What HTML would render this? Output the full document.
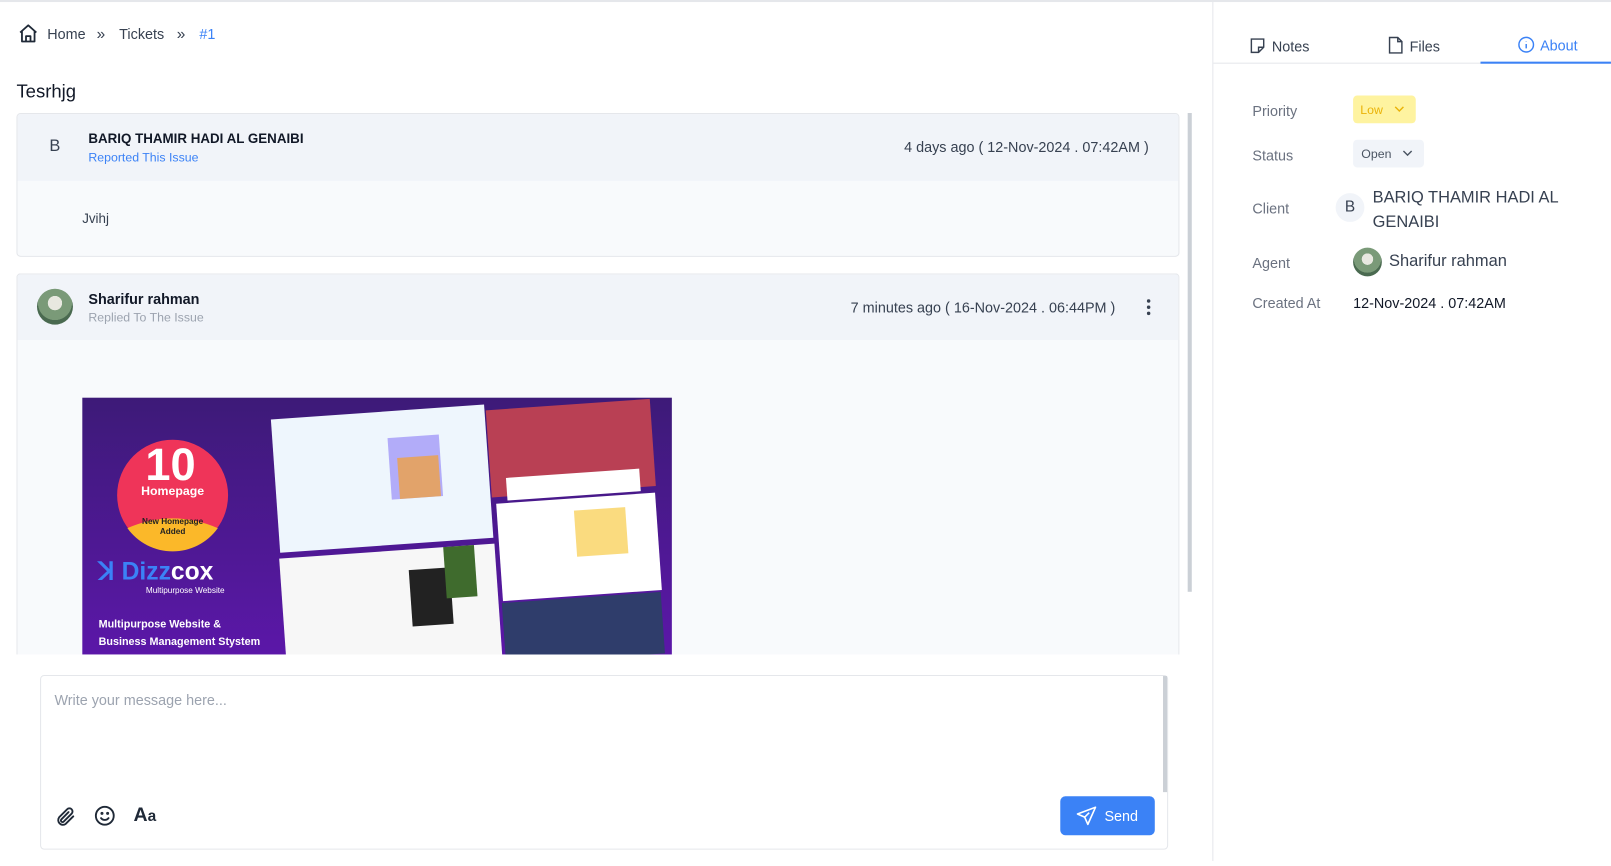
<!DOCTYPE html>
<html><head><meta charset="utf-8"><style>
*{box-sizing:border-box;margin:0;padding:0}
body{width:1611px;height:866px;background:#fff;font-family:"Liberation Sans",sans-serif;color:#111827;position:relative;overflow:hidden}
#w{position:absolute;left:0;top:0;width:1568px;height:843px;transform:scale(1.0274);transform-origin:0 0}
.abs{position:absolute}
.t{white-space:nowrap}
</style></head><body><div id="w">
<div class="abs" style="left:0;top:0;width:1611px;height:2px;background:#e5e7eb"></div>
<div class="abs" style="left:1180px;top:2px;width:1px;height:836px;background:#e5e7eb"></div>

<svg class="abs" style="left:17px;top:22px" width="21" height="21" viewBox="0 0 24 24" fill="none" stroke="#1f2937" stroke-width="2" stroke-linejoin="round"><path d="M3 11 12 3l9 8M5 9.5V21h14V9.5M9.5 21v-6h5v6"/></svg>
<div class="abs t" style="left:46px;top:25px;font-size:14px;color:#374151">Home</div>
<div class="abs t" style="left:94px;top:25px;font-size:15px;color:#374151">»</div>
<div class="abs t" style="left:116px;top:25px;font-size:14px;color:#374151">Tickets</div>
<div class="abs t" style="left:172px;top:25px;font-size:15px;color:#374151">»</div>
<div class="abs t" style="left:194px;top:25px;font-size:14px;color:#3b82f6">#1</div>
<div class="abs t" style="left:16px;top:79px;font-size:18px;color:#111827">Tesrhjg</div>

<div class="abs" style="left:1156px;top:110px;width:4px;height:466px;background:#cbd0d6"></div>

<div class="abs" style="left:16px;top:110px;width:1132px;height:140px;border:1px solid #e5e7eb;border-radius:4px;background:#f8fafc;overflow:hidden">
 <div style="height:65px;background:#f1f4f9"></div>
</div>
<div class="abs t" style="left:48px;top:134px;font-size:16px;color:#374151">B</div>
<div class="abs t" style="left:86px;top:127px;font-size:13px;font-weight:bold;color:#111827">BARIQ THAMIR HADI AL GENAIBI</div>
<div class="abs t" style="left:86px;top:146px;font-size:12px;color:#3b82f6">Reported This Issue</div>
<div class="abs t" style="left:880px;top:135px;font-size:14px;color:#374151">4 days ago ( 12-Nov-2024 . 07:42AM )</div>
<div class="abs t" style="left:80px;top:205px;font-size:13px;color:#374151">Jvihj</div>

<div class="abs" style="left:16px;top:266px;width:1132px;height:371px;border:1px solid #e5e7eb;border-bottom:none;border-radius:4px 4px 0 0;background:#f8fafc;overflow:hidden">
 <div style="height:64px;background:#f1f4f9"></div>
</div>
<div class="abs" style="left:36px;top:281px;width:35px;height:35px;border-radius:50%;background:radial-gradient(circle at 50% 40%,#e8e8e0 0 25%,#7a9a78 26% 60%,#4a6a50 61%)"></div>
<div class="abs t" style="left:86px;top:283px;font-size:14px;font-weight:bold;color:#111827">Sharifur rahman</div>
<div class="abs t" style="left:86px;top:302px;font-size:12px;color:#9ca3af">Replied To The Issue</div>
<div class="abs t" style="left:828px;top:291px;font-size:14px;color:#374151">7 minutes ago ( 16-Nov-2024 . 06:44PM )</div>
<svg class="abs" style="left:1112px;top:290px" width="12" height="18"><circle cx="6" cy="3" r="1.7" fill="#374151"/><circle cx="6" cy="9" r="1.7" fill="#374151"/><circle cx="6" cy="15" r="1.7" fill="#374151"/></svg>

<svg class="abs" style="left:80px;top:387px" width="574" height="250" viewBox="0 0 574 250">
<defs><linearGradient id="g" x1="0" y1="0" x2="0" y2="1"><stop offset="0" stop-color="#3d1a78"/><stop offset="1" stop-color="#5b17a8"/></linearGradient></defs>
<rect width="574" height="250" fill="url(#g)"/>
<circle cx="88" cy="95" r="54" fill="#ef3459"/>
<path d="M44 127 A54 54 0 0 0 132 127 Q88 108 44 127Z" fill="#fbb829"/>
<text x="86" y="80" fill="#fff" font-size="44" font-weight="bold" text-anchor="middle" font-family="Liberation Sans">10</text>
<text x="88" y="95" fill="#fff" font-size="12" font-weight="bold" text-anchor="middle" font-family="Liberation Sans">Homepage</text>
<text x="88" y="123" fill="#222" font-size="8" font-weight="bold" text-anchor="middle" font-family="Liberation Sans">New Homepage</text>
<text x="88" y="133" fill="#222" font-size="8" font-weight="bold" text-anchor="middle" font-family="Liberation Sans">Added</text>
<text x="16" y="177" fill="#3b82f6" font-size="24" font-weight="bold" font-family="Liberation Sans">ꓘ Dizz<tspan fill="#fff">cox</tspan></text>
<text x="62" y="190" fill="#fff" font-size="8" font-family="Liberation Sans">Multipurpose Website</text>
<text x="16" y="224" fill="#fff" font-size="10.5" font-weight="bold" font-family="Liberation Sans">Multipurpose Website &amp;</text>
<text x="16" y="241" fill="#fff" font-size="10.5" font-weight="bold" font-family="Liberation Sans">Business Management Stystem</text>
<g transform="rotate(-4 290 80)"><rect x="188" y="14" width="208" height="130" fill="#eef6fd"/><rect x="300" y="40" width="50" height="60" fill="#8b7cf6" opacity=".6"/><rect x="308" y="60" width="40" height="40" fill="#f6a02d" opacity=".7"/></g>
<g transform="rotate(-4 500 40)"><rect x="395" y="5" width="160" height="85" fill="#b94054"/><rect x="410" y="72" width="130" height="22" fill="#fff"/></g>
<g transform="rotate(-4 290 200)"><rect x="195" y="150" width="210" height="110" fill="#f7f7f7"/><rect x="320" y="170" width="40" height="55" fill="#222"/><rect x="355" y="150" width="30" height="50" fill="#3f6b2d"/></g>
<g transform="rotate(-4 480 130)"><rect x="405" y="98" width="155" height="95" fill="#fff"/><rect x="480" y="110" width="50" height="45" fill="#f5b800" opacity=".5"/></g>
<g transform="rotate(-4 480 220)"><rect x="410" y="195" width="155" height="60" fill="#2f3d6b"/></g>
</svg>

<div class="abs" style="left:39px;top:657px;width:1098px;height:170px;border:1px solid #e5e7eb;border-radius:4px;background:#fff"></div>
<div class="abs" style="left:1132px;top:658px;width:4px;height:113px;background:#cbd0d6"></div>
<div class="abs t" style="left:53px;top:673px;font-size:14px;color:#9ca3af">Write your message here...</div>
<svg class="abs" style="left:53px;top:784px" width="22" height="22" viewBox="0 0 24 24" fill="none" stroke="#1f2937" stroke-width="2" stroke-linecap="round"><path d="M20 11.5 12 19.5a5 5 0 0 1-7-7l8.5-8.5a3.3 3.3 0 0 1 4.7 4.7L9.7 17.2a1.7 1.7 0 0 1-2.4-2.4L15 7"/></svg>
<svg class="abs" style="left:91px;top:783px" width="22" height="22" viewBox="0 0 24 24" fill="none" stroke="#1f2937" stroke-width="2" stroke-linecap="round"><circle cx="12" cy="12" r="9.5"/><path d="M8 14.5a5 5 0 0 0 8 0"/><circle cx="9" cy="9.5" r=".6" fill="#1f2937"/><circle cx="15" cy="9.5" r=".6" fill="#1f2937"/></svg>
<div class="abs t" style="left:130px;top:783px;font-size:19px;color:#1f2937;font-weight:bold">A<span style="font-size:15px">a</span></div>
<div class="abs" style="left:1032px;top:775px;width:92px;height:38px;border-radius:5px;background:#3b82f6"></div>
<svg class="abs" style="left:1047px;top:784px" width="21" height="21" viewBox="0 0 24 24" fill="none" stroke="#fff" stroke-width="1.8" stroke-linejoin="round"><path d="M22 2 2 9.5l8 3.5 3.5 8L22 2ZM10 13l5-5"/></svg>
<div class="abs t" style="left:1075px;top:786px;font-size:14px;color:#fff">Send</div>

<div class="abs" style="left:1181px;top:61px;width:430px;height:1px;background:#e5e7eb"></div>
<div class="abs" style="left:1441px;top:60px;width:127px;height:2px;background:#3b82f6"></div>
<svg class="abs" style="left:1216px;top:36px" width="16" height="17" viewBox="0 0 16 17" fill="none" stroke="#374151" stroke-width="1.4"><path d="M2 2h12v8l-5 5H2Z M9 15v-5h5"/></svg>
<div class="abs t" style="left:1238px;top:37px;font-size:14px;color:#374151">Notes</div>
<svg class="abs" style="left:1351px;top:35px" width="15" height="18" viewBox="0 0 15 18" fill="none" stroke="#374151" stroke-width="1.4"><path d="M1.5 1.5h8l4 4v11h-12Z M9.5 1.5v4h4"/></svg>
<div class="abs t" style="left:1372px;top:37px;font-size:14px;color:#374151">Files</div>
<svg class="abs" style="left:1477px;top:35px" width="17" height="17" viewBox="0 0 24 24" fill="none" stroke="#3b82f6" stroke-width="2"><circle cx="12" cy="12" r="10"/><path d="M12 11v6M12 7v.5"/></svg>
<div class="abs t" style="left:1499px;top:36px;font-size:14px;color:#3b82f6">About</div>

<div class="abs t" style="left:1219px;top:100px;font-size:14px;color:#6b7280">Priority</div>
<div class="abs" style="left:1317px;top:93px;width:61px;height:27px;border-radius:4px;background:#fef3a0"></div>
<div class="abs t" style="left:1324px;top:100px;font-size:12px;color:#eab308">Low</div>
<svg class="abs" style="left:1357px;top:102px" width="10" height="8"><path d="M1 2l4 4 4-4" stroke="#eab308" stroke-width="1.4" fill="none"/></svg>
<div class="abs t" style="left:1219px;top:143px;font-size:14px;color:#6b7280">Status</div>
<div class="abs" style="left:1317px;top:136px;width:69px;height:27px;border-radius:4px;background:#f1f4f9"></div>
<div class="abs t" style="left:1325px;top:143px;font-size:12px;color:#4b5563">Open</div>
<svg class="abs" style="left:1365px;top:145px" width="10" height="8"><path d="M1 2l4 4 4-4" stroke="#4b5563" stroke-width="1.4" fill="none"/></svg>
<div class="abs t" style="left:1219px;top:195px;font-size:14px;color:#6b7280">Client</div>
<div class="abs" style="left:1300px;top:188px;width:28px;height:28px;border-radius:50%;background:#f1f4f9;text-align:center;line-height:28px;font-size:15px;color:#374151">B</div>
<div class="abs" style="left:1336px;top:181px;font-size:16px;line-height:24px;color:#374151;width:200px">BARIQ THAMIR HADI AL GENAIBI</div>
<div class="abs t" style="left:1219px;top:248px;font-size:14px;color:#6b7280">Agent</div>
<div class="abs" style="left:1317px;top:241px;width:28px;height:28px;border-radius:50%;background:radial-gradient(circle at 50% 40%,#e8e8e0 0 25%,#7a9a78 26% 60%,#4a6a50 61%)"></div>
<div class="abs t" style="left:1352px;top:246px;font-size:16px;color:#374151">Sharifur rahman</div>
<div class="abs t" style="left:1219px;top:287px;font-size:14px;color:#6b7280">Created At</div>
<div class="abs t" style="left:1317px;top:287px;font-size:14px;color:#111827">12-Nov-2024 . 07:42AM</div>
</div></body></html>
